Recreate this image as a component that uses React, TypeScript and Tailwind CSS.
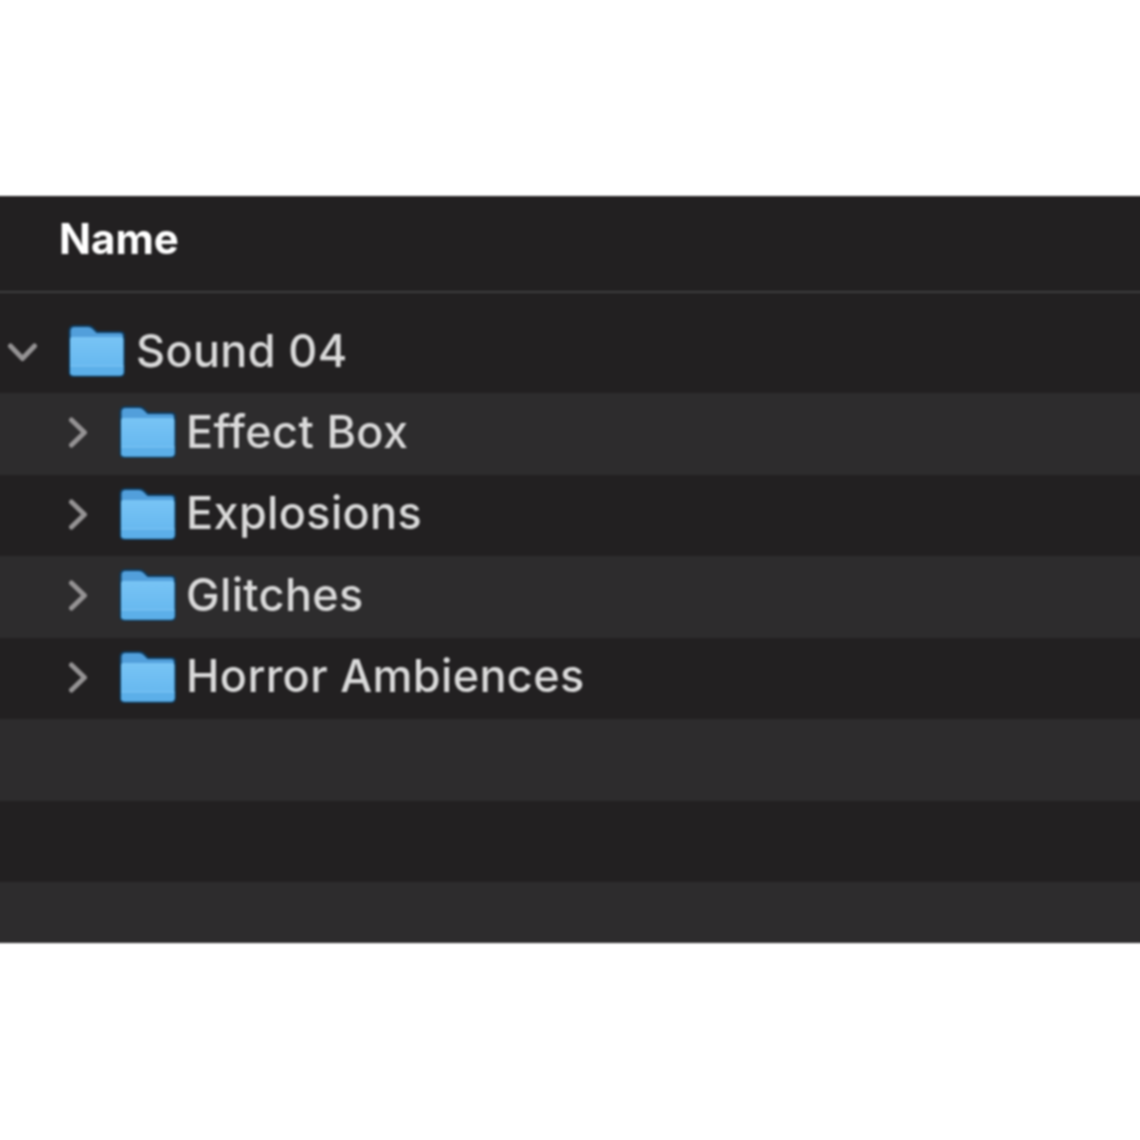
const rows = ['Effect Box', 'Explosions', 'Glitches', 'Horror Ambiences']

function Folder() {
  return (
    <svg width="58" height="54" viewBox="-1 -1 58 54" className="shrink-0">
      <defs>
        <linearGradient id="folderFront" x1="0" y1="0" x2="0" y2="1">
          <stop offset="0" stopColor="#78c4f5" />
          <stop offset="1" stopColor="#62b5ee" />
        </linearGradient>
      </defs>
      <path
        d="M0.5 6 Q0.5 1 5.5 1 H19 Q22 1 24 3 L28 7 H51 Q55 7 55 11 V47 Q55 51 51 51 H4.5 Q0.5 51 0.5 47 Z"
        fill="#529fdb"
        stroke="#0f3a5c"
        strokeWidth="2"
      />
      <path d="M1 14 Q1 12 3.5 12 H52 Q54.5 12 54.5 14 V47 Q54.5 50.5 51 50.5 H4.5 Q1 50.5 1 47 Z" fill="url(#folderFront)" />
      <path d="M1 41 H54.5 V47 Q54.5 50.5 51 50.5 H4.5 Q1 50.5 1 47 Z" fill="#5cafe9" />
      <path d="M1 41 H54.5" stroke="#80c8f6" strokeWidth="1" />
    </svg>
  )
}

function Chevron({ open }: { open?: boolean }) {
  return (
    <svg width="32" height="32" viewBox="0 0 32 32" fill="none" className="shrink-0">
      <path
        d={open ? 'M3.5 9 L15.5 21.5 L27.5 9' : 'M10.5 4 L23.5 16.5 L10.5 29'}
        stroke="#959394"
        strokeWidth="5"
        strokeLinecap="round"
        strokeLinejoin="round"
      />
    </svg>
  )
}

function Row({ label, shaded }: { label: string; shaded: boolean }) {
  return (
    <div className={`flex h-[81.5px] items-center pb-[3px] pl-[65px] ${shaded ? 'bg-[#2d2c2d]' : 'bg-[#222021]'}`}>
      <Chevron />
      <div className="ml-[26px]">
        <Folder />
      </div>
      <span className="mb-[2px] ml-[9px] text-[45px] font-[450] leading-none tracking-[0.35px] text-[#dadada]">{label}</span>
    </div>
  )
}

export default function App() {
  return (
    <div className="h-[1140px] w-[1140px] overflow-hidden bg-white pt-[196px] font-['Inter',sans-serif]">
      <div className="-mx-[4px] h-[747px] overflow-hidden bg-[#222021] blur-[0.8px]">
        <div className="flex h-[97px] items-center border-b-2 border-[#3e3d3e] pb-[10px] pl-[63px]">
          <span className="text-[42px] font-bold leading-none text-white">Name</span>
        </div>
        <div className="flex h-[100px] items-center pl-[11px] pt-[14px]">
          <div className="mt-[6px]">
            <Chevron open />
          </div>
          <div className="ml-[29px] mt-[2px]">
            <Folder />
          </div>
          <span className="ml-[10px] text-[45px] font-[450] leading-none tracking-[0.35px] text-[#dadada]">Sound 04</span>
        </div>
        {rows.map((label, i) => (
          <Row key={label} label={label} shaded={i % 2 === 0} />
        ))}
        <div className="h-[82px] bg-[#2d2c2d]" />
        <div className="h-[81px] bg-[#222021]" />
        <div className="h-[62px] bg-[#2d2c2d]" />
      </div>
    </div>
  )
}
